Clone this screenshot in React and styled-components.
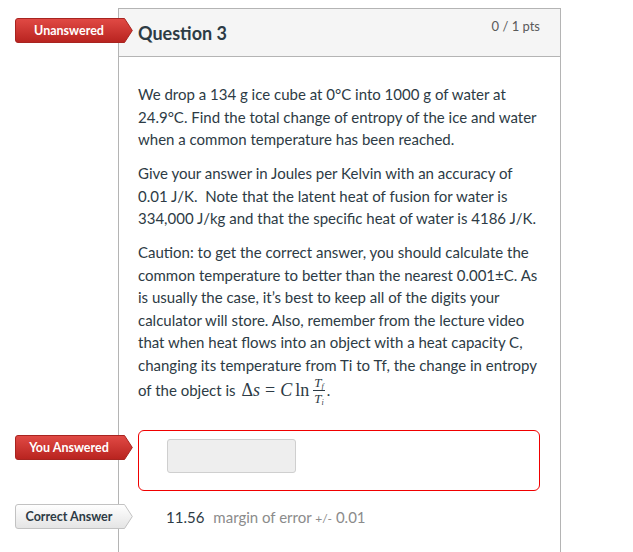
import React from "react";
import styled, { createGlobalStyle } from "styled-components";

const GlobalStyle = createGlobalStyle`
  html, body {
    margin: 0;
    padding: 0;
    background: #ffffff;
  }
  body {
    font-family: Lato, "Liberation Sans", sans-serif;
    color: #2d3b45;
  }
`;

const Page = styled.div`
  padding: 8px 0 0 118px;
  min-height: 600px;
  box-sizing: border-box;
`;

const Card = styled.div`
  position: relative;
  width: 443px;
  min-height: 620px;
  box-sizing: border-box;
  border: 1px solid #b4b4b4;
  border-bottom: none;
`;

const Header = styled.div`
  display: flex;
  justify-content: space-between;
  height: 47px;
  padding: 0 20px 0 19px;
  background: #f5f5f5;
  border-bottom: 1px solid #b4b4b4;
`;

const Title = styled.h2`
  margin: 0;
  align-self: center;
  font-size: 18px;
  font-weight: 700;
  color: #2d3b45;
`;

const Points = styled.div`
  padding-top: 8px;
  font-size: 13px;
  line-height: 18px;
  color: #5a5a5a;
`;

const Body = styled.div`
  padding: 26px 20px 0 19px;
  font-size: 15px;
  line-height: 22.5px;
`;

const Para = styled.p`
  margin: 0 0 11.5px;
`;

const Formula = styled.span`
  font-family: "Liberation Serif", "DejaVu Serif", serif;
  font-size: 18px;
  white-space: nowrap;
  margin-left: 2px;
`;

const MathVar = styled.i`
  font-style: italic;
  margin: ${(p) => p.$m || "0"};
`;

const Op = styled.span`
  margin: 0 5px;
`;

const Frac = styled.span`
  display: inline-block;
  vertical-align: -7px;
  text-align: center;
  font-size: 13px;
  line-height: 13px;
  margin: 0 2px 0 4px;
`;

const Num = styled.span`
  display: block;
  padding: 0 1px 1px;
  border-bottom: 1px solid #2d3b45;
  font-style: italic;
`;

const Den = styled.span`
  display: block;
  padding: 1px 1px 0;
  font-style: italic;
`;

const Sub = styled.span`
  font-size: 8px;
  line-height: 0;
  vertical-align: -2px;
`;

const Badge = styled.div`
  position: absolute;
  left: -104px;
  top: ${(p) => p.$top}px;
  width: 118px;
  height: 25px;
  display: flex;
  align-items: center;
  justify-content: center;
  padding-right: 10px;
  box-sizing: border-box;
  font-size: 12.5px;
  font-weight: 700;
  color: ${(p) => (p.$light ? "#2d3b45" : "#ffffff")};
`;

const BadgeShape = styled.svg`
  position: absolute;
  left: 0;
  top: 0;
  z-index: 0;
`;

const BadgeText = styled.span`
  position: relative;
  z-index: 1;
`;

function Tag({ top, light, children }) {
  const id = light ? "gLight" : "gRed" + top;
  return (
    <Badge $top={top} $light={light}>
      <BadgeShape width="118" height="25" viewBox="0 0 118 25">
        <defs>
          <linearGradient id={id} x1="0" y1="0" x2="0" y2="1">
            <stop offset="0" stopColor={light ? "#ffffff" : "#e14a45"} />
            <stop offset="1" stopColor={light ? "#e4e4e4" : "#b8231f"} />
          </linearGradient>
        </defs>
        <path
          d="M3 0.5 H109.5 L117.3 12.5 L109.5 24.5 H3 Q0.5 24.5 0.5 22 V3 Q0.5 0.5 3 0.5 Z"
          fill={`url(#${id})`}
          stroke={light ? "#c2c2c2" : "#a82420"}
          strokeWidth="1"
        />
      </BadgeShape>
      <BadgeText>{children}</BadgeText>
    </Badge>
  );
}

const AnswerRow = styled.div`
  position: relative;
  padding: 0 20px 0 19px;
  margin-top: ${(p) => p.$gap}px;
`;

const AnswerBox = styled.div`
  height: 61px;
  box-sizing: border-box;
  border: 1px solid #f00000;
  border-radius: 6px;
  padding: 8px 0 0 28px;
`;

const Input = styled.div`
  width: 129px;
  height: 34px;
  box-sizing: border-box;
  background: #eeeeee;
  border: 1px solid #cfcfcf;
  border-radius: 3px;
`;

const CorrectLine = styled.div`
  display: flex;
  align-items: center;
  gap: 9px;
  height: 25px;
  padding-left: 28px;
`;

const Value = styled.span`
  font-size: 15px;
  color: #2d3b45;
`;

const Margin = styled.span`
  font-size: 15px;
  color: #8b8b8b;
`;

const Small = styled.span`
  font-size: 12px;
`;

export default function App() {
  return (
    <>
      <GlobalStyle />
      <Page>
        <Card>
          <Tag top={9}>Unanswered</Tag>
          <Header>
            <Title>Question 3</Title>
            <Points>0 / 1 pts</Points>
          </Header>
          <Body>
            <Para>
              We drop a 134 g ice cube at 0°C into 1000 g of water at 24.9°C.
              Find the total change of entropy of the ice and water when a
              common temperature has been reached.
            </Para>
            <Para>
              Give your answer in Joules per Kelvin with an accuracy of 0.01
              J/K.&nbsp; Note that the latent heat of fusion for water is
              334,000 J/kg and that the specific heat of water is 4186 J/K.
            </Para>
            <Para>
              Caution: to get the correct answer, you should calculate the
              common temperature to better than the nearest 0.001±C. As is
              usually the case, it’s best to keep all of the digits your
              calculator will store. Also, remember from the lecture video that
              when heat flows into an object with a heat capacity C, changing
              its temperature from Ti to Tf, the change in entropy of the object
              is{" "}
              <Formula>
                Δ<MathVar>s</MathVar>
                <Op>=</Op>
                <MathVar $m="0 3px 0 0">C</MathVar>ln
                <Frac>
                  <Num>
                    T<Sub>f</Sub>
                  </Num>
                  <Den>
                    T<Sub>i</Sub>
                  </Den>
                </Frac>
              </Formula>
              .
            </Para>
          </Body>
          <AnswerRow $gap={25}>
            <Tag top={5}>You Answered</Tag>
            <AnswerBox>
              <Input />
            </AnswerBox>
          </AnswerRow>
          <AnswerRow $gap={13}>
            <Tag top={0} light>
              Correct Answer
            </Tag>
            <CorrectLine>
              <Value>11.56</Value>
              <Margin>
                margin of error <Small>+/-</Small> 0.01
              </Margin>
            </CorrectLine>
          </AnswerRow>
        </Card>
      </Page>
    </>
  );
}
